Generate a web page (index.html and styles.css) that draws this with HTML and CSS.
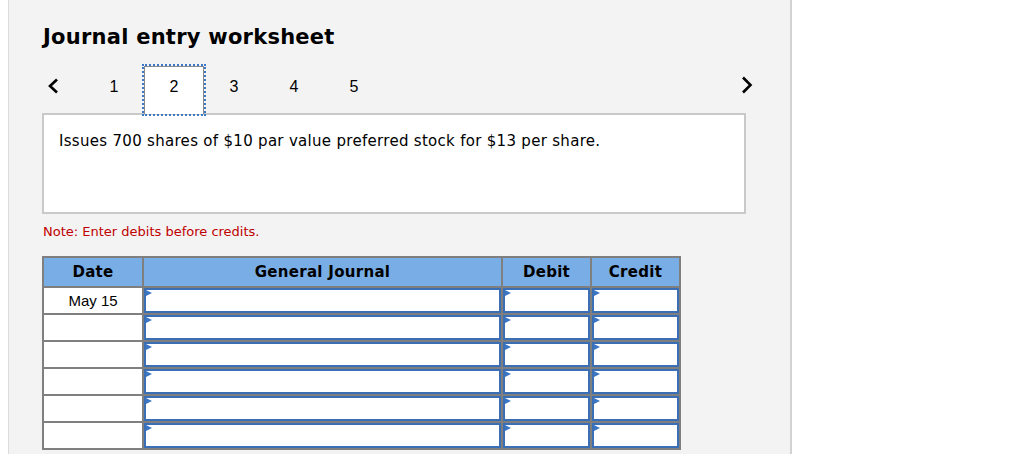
FILE: index.html
```html
<!DOCTYPE html>
<html>
<head>
<meta charset="utf-8">
<link rel="stylesheet" href="styles.css">
</head>
<body>
<div class="panel">
  <h1 class="title">Journal entry worksheet</h1>
  <div class="nav">
    <svg class="arrow prev" width="12" height="16" viewBox="0 0 12 16"><path d="M10 1.5 L3 8 L10 14.5" fill="none" stroke="#000" stroke-width="2.6"/></svg>
    <div class="steps">
      <div class="step">1</div>
      <div class="step current">2</div>
      <div class="step">3</div>
      <div class="step">4</div>
      <div class="step">5</div>
    </div>
    <svg class="arrow next" width="12" height="18" viewBox="0 0 12 18"><path d="M2 1.5 L9.5 9 L2 16.5" fill="none" stroke="#000" stroke-width="2.6"/></svg>
  </div>
  <div class="question">Issues 700 shares of $10 par value preferred stock for $13 per share.</div>
  <p class="note">Note: Enter debits before credits.</p>
  <div class="journal">
    <div class="hd">Date</div>
    <div class="hd">General Journal</div>
    <div class="hd">Debit</div>
    <div class="hd">Credit</div>

    <div class="cell date">May 15</div>
    <div class="cell"><div class="field"><span class="flag"></span></div></div>
    <div class="cell"><div class="field"><span class="flag"></span></div></div>
    <div class="cell"><div class="field"><span class="flag"></span></div></div>

    <div class="cell date"></div>
    <div class="cell"><div class="field"><span class="flag"></span></div></div>
    <div class="cell"><div class="field"><span class="flag"></span></div></div>
    <div class="cell"><div class="field"><span class="flag"></span></div></div>

    <div class="cell date"></div>
    <div class="cell"><div class="field"><span class="flag"></span></div></div>
    <div class="cell"><div class="field"><span class="flag"></span></div></div>
    <div class="cell"><div class="field"><span class="flag"></span></div></div>

    <div class="cell date"></div>
    <div class="cell"><div class="field"><span class="flag"></span></div></div>
    <div class="cell"><div class="field"><span class="flag"></span></div></div>
    <div class="cell"><div class="field"><span class="flag"></span></div></div>

    <div class="cell date"></div>
    <div class="cell"><div class="field"><span class="flag"></span></div></div>
    <div class="cell"><div class="field"><span class="flag"></span></div></div>
    <div class="cell"><div class="field"><span class="flag"></span></div></div>

    <div class="cell date"></div>
    <div class="cell"><div class="field"><span class="flag"></span></div></div>
    <div class="cell"><div class="field"><span class="flag"></span></div></div>
    <div class="cell"><div class="field"><span class="flag"></span></div></div>
  </div>
</div>
</body>
</html>
```
FILE: styles.css
```css
html, body {
  margin: 0;
  padding: 0;
  background: #fff;
  overflow: hidden;
}
.panel {
  margin-left: 8px;
  min-height: 500px;
  background: #f3f3f3;
  border-left: 1px solid #dcdcdc;
  border-right: 2px solid #d2d2d2;
  padding: 25px 0 0 33px;
  box-sizing: content-box;
  width: 748px;
  font-family: "DejaVu Sans", Verdana, sans-serif;
  color: #000;
}
.title {
  margin: 0 0 0 1px;
  font-size: 21px;
  letter-spacing: 0.25px;
  line-height: 24px;
  font-weight: bold;
}
.nav {
  margin-top: 17px;
  height: 48px;
  width: 711px;
  display: flex;
  align-items: flex-start;
  position: relative;
  z-index: 2;
}
.arrow {
  display: block;
}
.prev {
  margin: 12px 0 0 5px;
}
.next {
  margin: 10px 0 0 auto;
}
.steps {
  display: flex;
  margin-left: 25px;
}
.step {
  width: 60px;
  height: 48px;
  box-sizing: border-box;
  padding-top: 12px;
  line-height: 18px;
  text-align: center;
  font-family: "Liberation Sans", Arial, sans-serif;
  font-size: 16px;
}
.step.current {
  background: #fff;
  border: 1px solid #8a8a8a;
  border-bottom: none;
  outline: 2px dotted #3a78c8;
  padding-top: 11px;
}
.question {
  margin-top: -1px;
  height: 101px;
  width: 704px;
  box-sizing: border-box;
  background: #fff;
  border: 2px solid #c9c9c9;
  padding: 17px 15px 0;
  font-size: 15px;
  letter-spacing: 0.3px;
  line-height: 18px;
  position: relative;
  z-index: 1;
}
.note {
  margin: 10px 0 0 1px;
  font-size: 13px;
  line-height: 16px;
  color: #c00000;
}
.journal {
  margin-top: 16px;
  display: grid;
  grid-template-columns: 100px 359px 89px 89px;
  grid-auto-rows: 27px;
  grid-template-rows: 30px;
  width: 639px;
  box-sizing: border-box;
  border-left: 2px solid #7f7f7f;
  border-top: 2px solid #7f7f7f;
}
.hd {
  background: #79ade5;
  border-right: 2px solid #7f7f7f;
  border-bottom: 2px solid #7f7f7f;
  text-align: center;
  font-weight: bold;
  font-size: 15px;
  letter-spacing: 0.3px;
  line-height: 28px;
}
.cell {
  background: #fff;
  border-right: 2px solid #7f7f7f;
  border-bottom: 2px solid #7f7f7f;
  min-width: 0;
}
.date {
  text-align: center;
  font-family: "Liberation Sans", Arial, sans-serif;
  font-size: 15px;
  line-height: 25px;
}
.field {
  position: relative;
  height: 100%;
  box-sizing: border-box;
  border: 2px solid #3a6fb6;
  background: #fff;
}
.flag {
  position: absolute;
  left: 0;
  top: 0;
  width: 0;
  height: 0;
  border-style: solid;
  border-width: 3.5px 0 3.5px 6px;
  border-color: transparent transparent transparent #3a76c4;
}
```
